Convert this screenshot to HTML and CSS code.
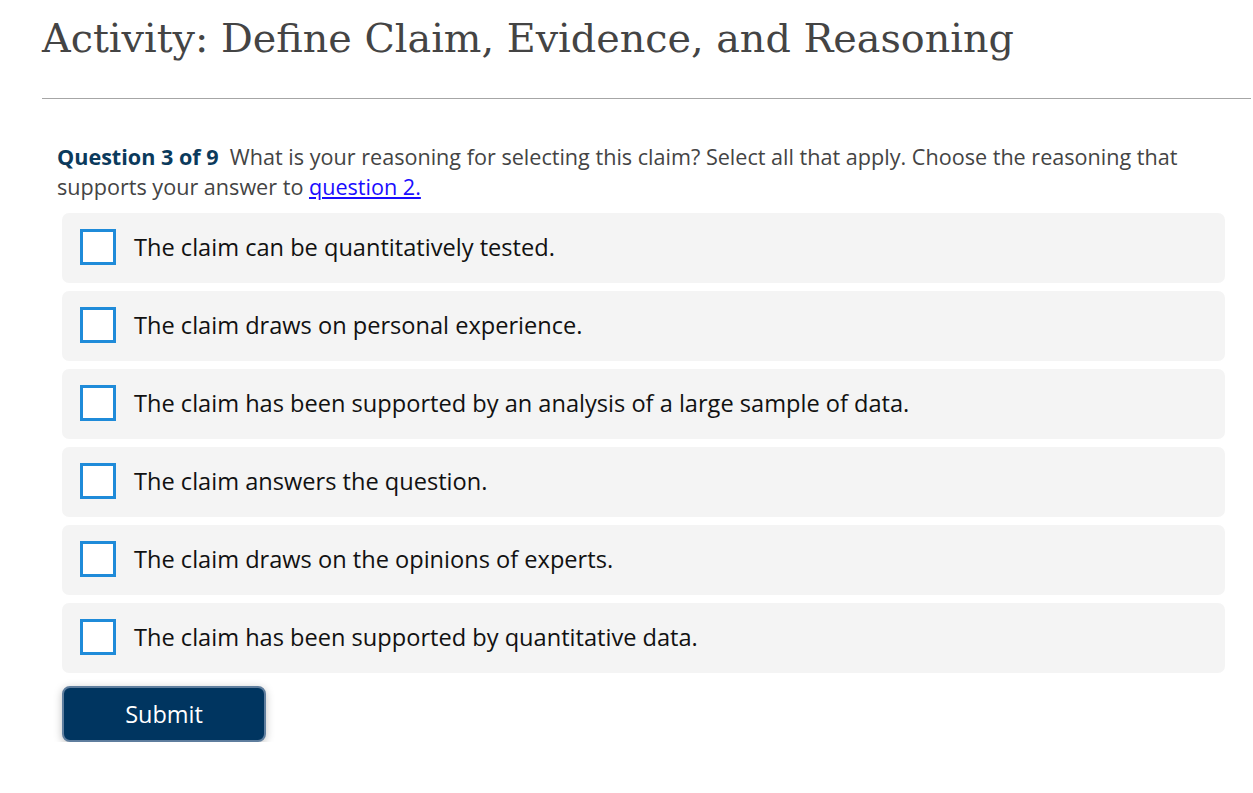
FILE: index.html
```html
<!DOCTYPE html>
<html>
<head>
<meta charset="utf-8">
<link rel="stylesheet" href="styles.css">
</head>
<body>
<div class="page">
  <h1 class="title">Activity: Define Claim, Evidence, and Reasoning</h1>
  <hr class="rule">
  <div class="question">
    <p class="prompt"><span class="qnum">Question 3 of 9</span>&nbsp; What is your reasoning for selecting this claim? Select all that apply. Choose the reasoning that supports your answer to <a href="#" class="link">question 2.</a></p>
    <div class="options">
      <label class="option"><span class="box"></span><span class="otext">The claim can be quantitatively tested.</span></label>
      <label class="option"><span class="box"></span><span class="otext">The claim draws on personal experience.</span></label>
      <label class="option"><span class="box"></span><span class="otext">The claim has been supported by an analysis of a large sample of data.</span></label>
      <label class="option"><span class="box"></span><span class="otext">The claim answers the question.</span></label>
      <label class="option"><span class="box"></span><span class="otext">The claim draws on the opinions of experts.</span></label>
      <label class="option"><span class="box"></span><span class="otext">The claim has been supported by quantitative data.</span></label>
    </div>
    <button class="submit">Submit</button>
  </div>
</div>
</body>
</html>
```
FILE: styles.css
```css
html, body { margin: 0; padding: 0; background: #fff; }
.page { padding-left: 42px; padding-right: 2px; }
.title {
  margin: 0;
  padding-top: 12px;
  font-family: "DejaVu Serif", "Liberation Serif", serif;
  font-weight: normal;
  font-size: 39.7px;
  line-height: 52px;
  color: #444;
}
.rule {
  margin: 34px 0 0 0;
  border: 0;
  border-top: 1px solid #a6a6a6;
  height: 0;
}
.question { padding: 43px 26px 0 15px; font-family: "Open Sans", sans-serif; }
.prompt {
  margin: 0;
  font-size: 21.6px;
  line-height: 30px;
  color: #444;
}
.qnum { font-weight: bold; color: #0b3a5c; }
.link { color: #1a0dff; text-decoration: underline; }
.options { display: flex; flex-direction: column; gap: 8px; margin: 11px 0 0 5px; }
.option {
  display: flex;
  align-items: center;
  height: 70px;
  background: #f4f4f4;
  border-radius: 7px;
  padding-left: 18px;
  box-sizing: border-box;
}
.box {
  width: 36px; height: 36px;
  box-sizing: border-box;
  border: 3px solid #1f8bd9;
  background: #fff;
  flex: none;
  margin-top: -3px;
}
.otext { margin-left: 18px; font-size: 23.6px; color: #111; margin-top: -3px; }
.submit {
  margin: 13px 0 0 5px;
  width: 204px;
  height: 56px;
  background: #003560;
  color: #fff;
  font-family: "Open Sans", sans-serif;
  font-size: 23.5px;
  border: 2px solid #5f7e9e;
  border-radius: 8px;
  box-shadow: 0 2px 8px rgba(0,0,0,0.25);
}
```
